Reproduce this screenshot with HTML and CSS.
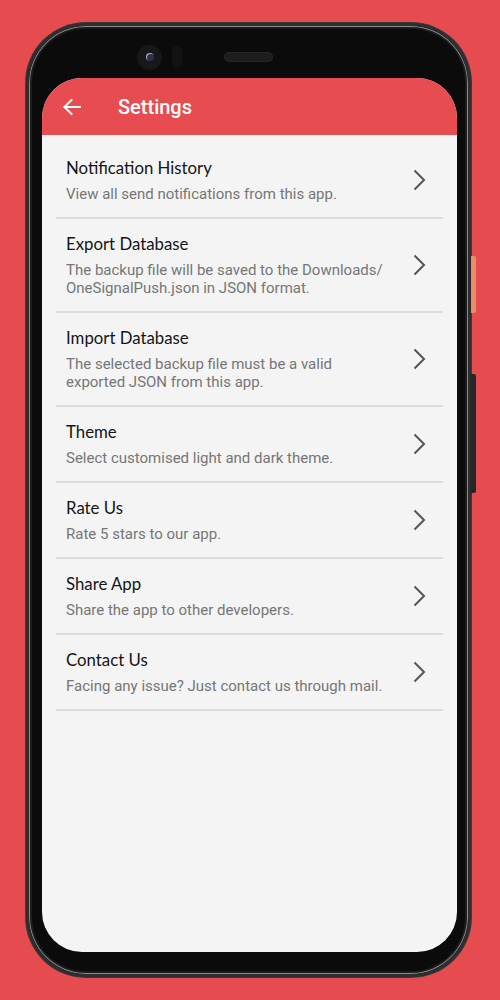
FILE: index.html
```html
<!DOCTYPE html>
<html lang="en">
<head>
<meta charset="utf-8">
<title>Settings</title>
<link rel="stylesheet" href="styles.css">
</head>
<body>
<div class="phone">
  <span class="btn btn-power"></span>
  <span class="btn btn-volume"></span>
  <div class="bezel">
    <div class="camera"><span class="lens"></span></div>
    <div class="sensor"></div>
    <div class="speaker"></div>
  </div>
  <div class="screen">
    <header class="appbar">
      <svg class="back" width="18" height="16" viewBox="0 0 18 16" aria-hidden="true">
        <path d="M1.5 8H17M8.5 1L1.5 8L8.5 15" fill="none" stroke="#fff" stroke-width="2" stroke-linecap="square"/>
      </svg>
      <h1 class="title">Settings</h1>
    </header>
    <ul class="list">
      <li class="item">
        <div class="text">
          <div class="item-title">Notification History</div>
          <div class="item-sub">View all send notifications from this app.</div>
        </div>
        <svg class="chev" width="13" height="22" viewBox="0 0 13 22"><path d="M1.5 1.5L11 11L1.5 20.5" fill="none" stroke="#555" stroke-width="2"/></svg>
      </li>
      <li class="item">
        <div class="text">
          <div class="item-title">Export Database</div>
          <div class="item-sub">The backup file will be saved to the Downloads/<br>OneSignalPush.json in JSON format.</div>
        </div>
        <svg class="chev" width="13" height="22" viewBox="0 0 13 22"><path d="M1.5 1.5L11 11L1.5 20.5" fill="none" stroke="#555" stroke-width="2"/></svg>
      </li>
      <li class="item">
        <div class="text">
          <div class="item-title">Import Database</div>
          <div class="item-sub">The selected backup file must be a valid<br>exported JSON from this app.</div>
        </div>
        <svg class="chev" width="13" height="22" viewBox="0 0 13 22"><path d="M1.5 1.5L11 11L1.5 20.5" fill="none" stroke="#555" stroke-width="2"/></svg>
      </li>
      <li class="item">
        <div class="text">
          <div class="item-title">Theme</div>
          <div class="item-sub">Select customised light and dark theme.</div>
        </div>
        <svg class="chev" width="13" height="22" viewBox="0 0 13 22"><path d="M1.5 1.5L11 11L1.5 20.5" fill="none" stroke="#555" stroke-width="2"/></svg>
      </li>
      <li class="item">
        <div class="text">
          <div class="item-title">Rate Us</div>
          <div class="item-sub">Rate 5 stars to our app.</div>
        </div>
        <svg class="chev" width="13" height="22" viewBox="0 0 13 22"><path d="M1.5 1.5L11 11L1.5 20.5" fill="none" stroke="#555" stroke-width="2"/></svg>
      </li>
      <li class="item">
        <div class="text">
          <div class="item-title">Share App</div>
          <div class="item-sub">Share the app to other developers.</div>
        </div>
        <svg class="chev" width="13" height="22" viewBox="0 0 13 22"><path d="M1.5 1.5L11 11L1.5 20.5" fill="none" stroke="#555" stroke-width="2"/></svg>
      </li>
      <li class="item">
        <div class="text">
          <div class="item-title">Contact Us</div>
          <div class="item-sub">Facing any issue? Just contact us through mail.</div>
        </div>
        <svg class="chev" width="13" height="22" viewBox="0 0 13 22"><path d="M1.5 1.5L11 11L1.5 20.5" fill="none" stroke="#555" stroke-width="2"/></svg>
      </li>
    </ul>
  </div>
</div>
</body>
</html>
```
FILE: styles.css
```css
* { box-sizing: border-box; }
html, body {
  margin: 0;
  padding: 0;
  height: 1000px;
  overflow: hidden;
  background: #e64b4f;
  font-family: Roboto, "Liberation Sans", sans-serif;
}
.phone {
  position: relative;
  margin: 23px 0 0 26px;
  width: 445px;
  height: 954px;
  border-radius: 60px;
  background: #0b0b0b;
  border: 3px solid #2e2e2e;
  box-shadow: inset 0 0 0 1px #8a8a8a, inset 0 0 0 3px #1c1c1c, 0 0 0 1px #3a3a3a;
  padding: 0 11px 22px 13px;
  display: flex;
  flex-direction: column;
}
.btn {
  position: absolute;
  right: -8px;
  width: 5px;
}
.btn-power {
  top: 230px;
  height: 57px;
  background: #ee8b6d;
  border-radius: 0 2px 2px 0;
}
.btn-volume {
  top: 348px;
  height: 119px;
  background: #262626;
  border-radius: 0 2px 2px 0;
}
.bezel {
  height: 52px;
  padding-top: 10px;
  display: flex;
  align-items: center;
}
.camera {
  margin-left: 95px;
  width: 25px;
  height: 25px;
  border-radius: 50%;
  background: #181818;
  display: flex;
  align-items: center;
  justify-content: center;
}
.lens {
  width: 8px;
  height: 8px;
  border-radius: 50%;
  background: #2b3346;
  box-shadow: inset 1px 1px 0 0 #aab;
}
.sensor {
  margin-left: 10px;
  width: 10px;
  height: 22px;
  border-radius: 5px;
  background: #131313;
}
.speaker {
  margin-left: 43px;
  width: 47px;
  height: 8px;
  border-radius: 4px;
  background: #1d1d1d;
  box-shadow: 0 0 0 1px #262626;
}
.screen {
  flex: 1;
  background: #f4f4f4;
  border-radius: 40px;
  overflow: hidden;
}
.appbar {
  height: 57px;
  background: #e74c50;
  display: flex;
  align-items: center;
  padding-left: 21px;
}
.back { display: block; }
.title {
  margin: 0 0 0 37px;
  color: #fff;
  font-family: Roboto, "Liberation Sans", sans-serif;
  font-weight: 500;
  font-size: 20px;
  line-height: 24px;
}
.list {
  list-style: none;
  margin: 0;
  padding: 8px 14px 0;
}
.item {
  display: flex;
  align-items: center;
  padding: 14px 17px 14px 10px;
  border-bottom: 2px solid #dcdcdc;
}
.text { flex: 1; }
.item-title {
  font-family: Lato, "Liberation Sans", sans-serif;
  font-size: 16.8px;
  line-height: 22px;
  color: #151515;
}
.item-sub {
  margin-top: 6px;
  font-family: Roboto, "Liberation Sans", sans-serif;
  font-size: 15px;
  line-height: 18px;
  color: #767676;
}
.chev { display: block; flex: none; }
```
